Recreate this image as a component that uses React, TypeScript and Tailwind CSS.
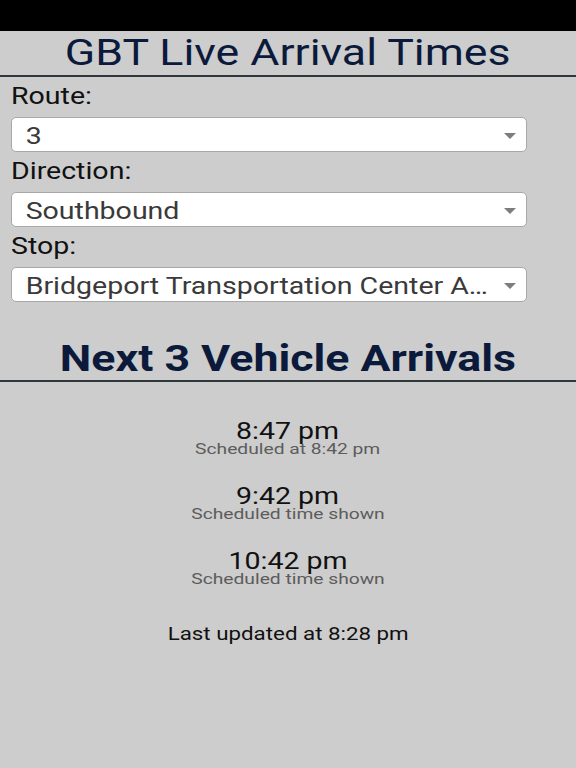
import { useState } from 'react'

const arrivals = [
    { time: '8:47 pm', note: 'Scheduled at 8:42 pm' },
    { time: '9:42 pm', note: 'Scheduled time shown' },
    { time: '10:42 pm', note: 'Scheduled time shown' },
]

const wide = 'inline-block scale-x-[1.24]'

function Picker({ label, value }: { label: string; value: string }) {
    return (
        <div>
            <div className="px-[11px] text-[23px] leading-[40px] text-[#111]">
                <span className={`${wide} origin-left`}>{label}</span>
            </div>
            <div className="relative mx-[11px] h-[35px] w-[516px] rounded-[5px] border border-[#a8a8a8] bg-white">
                <div
                    className={`${wide} w-[390px] origin-left truncate pl-[11px] pt-[4px] text-[23px] leading-[29px] text-[#3a3a3a]`}
                >
                    {value}
                </div>
                <svg className="absolute right-[10px] top-[15px]" width="12" height="6" viewBox="0 0 12 6">
                    <path d="M0 0h12L6 6z" fill="#7d7d7d" />
                </svg>
            </div>
        </div>
    )
}

export default function App() {
    const [stop] = useState('Bridgeport Transportation Center Arrivals Bay')

    return (
        <div className="min-h-[768px] bg-[#cdcdcd] font-['Roboto',sans-serif]">
            {/* status bar */}
            <div className="h-[31px] bg-black" />

            <h1 className="text-center text-[36px] leading-[44px] text-[#0b1a3b]">
                <span className={wide}>GBT Live Arrival Times</span>
            </h1>
            <div className="h-[2px] bg-[#2e3739]" />

            <Picker label="Route:" value="3" />
            <Picker label="Direction:" value="Southbound" />
            <Picker label="Stop:" value={stop} />

            <h2 className="mt-[36px] text-center text-[36px] font-bold leading-[42px] text-[#0b1a3b]">
                <span className={wide}>Next 3 Vehicle Arrivals</span>
            </h2>
            <div className="h-[2px] bg-[#2e3739]" />

            <div className="mt-[40px] flex flex-col items-center gap-[30px]">
                {arrivals.map(a => (
                    <div key={a.time} className="flex flex-col items-center">
                        <div className="text-[23px] leading-[20px] text-[#111]">
                            <span className={wide}>{a.time}</span>
                        </div>
                        <div className="text-[15.5px] leading-[15px] text-[#5c5c5c]">
                            <span className={wide}>{a.note}</span>
                        </div>
                    </div>
                ))}
            </div>

            <div className="mt-[35px] text-center text-[18px] leading-[24px] text-[#111]">
                <span className={wide}>Last updated at 8:28 pm</span>
            </div>
        </div>
    )
}
